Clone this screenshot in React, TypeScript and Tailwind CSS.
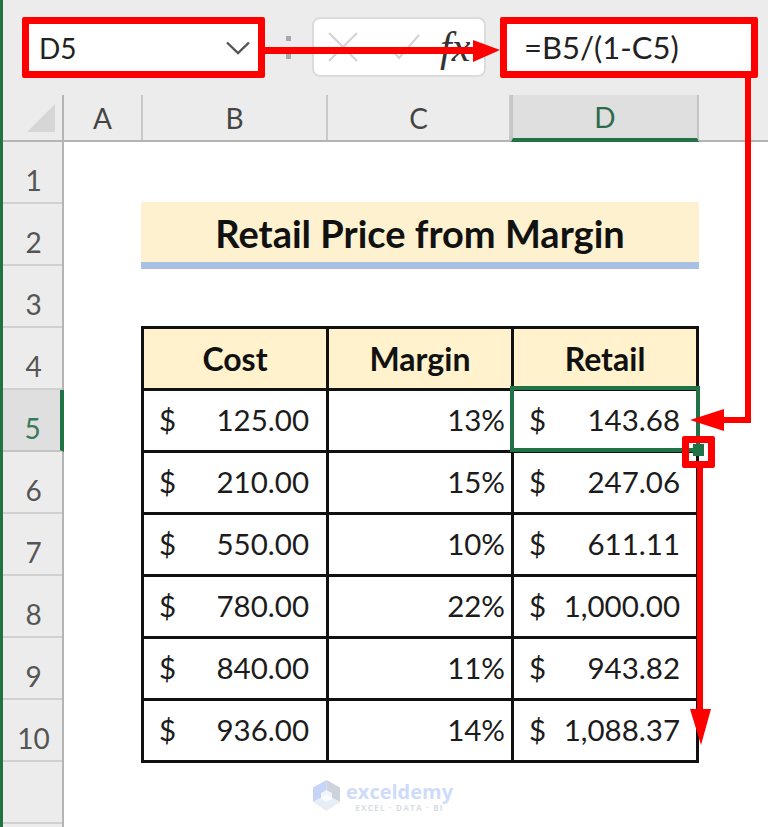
const font = "font-['Lato','Liberation_Sans',sans-serif]";

const rows = [
  { cost: "125.00", margin: "13%", retail: "143.68" },
  { cost: "210.00", margin: "15%", retail: "247.06" },
  { cost: "550.00", margin: "10%", retail: "611.11" },
  { cost: "780.00", margin: "22%", retail: "1,000.00" },
  { cost: "840.00", margin: "11%", retail: "943.82" },
  { cost: "936.00", margin: "14%", retail: "1,088.37" },
];

const columns = [
  { label: "A", width: "w-[79px]" },
  { label: "B", width: "w-[185px]" },
  { label: "C", width: "w-[183px]" },
  { label: "D", width: "w-[188px]", active: true },
];

const Money = ({ value, className }: { value: string; className: string }) => (
  <td className={`border-[3px] border-[#111] ${className}`}>
    <div className="flex items-center justify-between text-[29.5px] text-[#1c1c1c]">
      <span>$</span>
      <span>{value}</span>
    </div>
  </td>
);

const Arrows = () => (
  <svg className="absolute -left-[3px] top-0 pointer-events-none" width="768" height="827" viewBox="0 0 768 827">
    <g fill="#ff0000">
      <rect x="265" y="47" width="212" height="7" />
      <path d="M473 40 L500 50 L473 62 Z" />
      <rect x="745" y="78" width="6" height="345" />
      <rect x="716" y="417" width="35" height="6" />
      <path d="M690 420 L724 409 L724 431 Z" />
      <rect x="697" y="468" width="6" height="244" />
      <path d="M690 709 L711 709 L701 745 Z" />
    </g>
  </svg>
);

const Watermark = () => (
  <div className="absolute left-[310px] top-[780px] flex items-start gap-[6px]">
    <svg width="27" height="31" viewBox="0 0 27 31">
      <path d="M13.5 0 L27 7.5 L27 22 L13.5 15 Z" fill="#cdd3dc" />
      <path d="M13.5 0 L0 7.5 L0 22 L13.5 15 Z" fill="#c6d5f7" />
      <path d="M0 22 L13.5 15 L27 22 L13.5 31 Z" fill="#e6edf5" />
      <path d="M13.5 10 L19 13 L19 19 L13.5 22 L8 19 L8 13 Z" fill="#ffffff" opacity="0.75" />
    </svg>
    <div className="flex flex-col items-center">
      <span className="text-[20px] leading-[23px] font-bold text-[#cfdcf9] font-['Open_Sans',sans-serif]">exceldemy</span>
      <span className="text-[8px] leading-[9px] font-bold tracking-[1.3px] text-[#d9dde3] font-['Open_Sans',sans-serif]">EXCEL · DATA · BI</span>
    </div>
  </div>
);

export default function App() {
  return (
    <div className={`relative w-[768px] h-[827px] overflow-hidden bg-white border-l-[3px] border-[#217346] flex flex-col ${font}`}>
      {/* formula bar */}
      <div className="h-[95px] shrink-0 bg-[#ececec] flex items-start pt-[17px] pl-[19px]">
        <div className="w-[243px] h-[61px] bg-white border-[7px] border-[#ff0000] rounded-[2px] flex items-center justify-between pl-[10px] pr-[8px] text-[28px] text-[#222]">
          <span>D5</span>
          <svg width="24" height="14" viewBox="0 0 24 14" fill="none" stroke="#555" strokeWidth="2.4">
            <path d="M1 1.5 L12 12 L23 1.5" />
          </svg>
        </div>
        <div className="w-[47px] h-[61px] flex flex-col items-center justify-center gap-[13px]">
          <span className="w-[5px] h-[5px] bg-[#a8a8a8]" />
          <span className="w-[5px] h-[5px] bg-[#a8a8a8]" />
        </div>
        <div className="w-[174px] h-[60px] bg-white border-2 border-[#dcdcdc] rounded-[8px] flex items-center pl-[14px]">
          <svg width="30" height="30" viewBox="0 0 30 30" fill="none" stroke="#d2d2d2" strokeWidth="2">
            <path d="M1 1 L29 29 M29 1 L1 29" />
          </svg>
          <svg className="ml-[32px]" width="30" height="26" viewBox="0 0 30 26" fill="none" stroke="#d2d2d2" strokeWidth="2">
            <path d="M1 15 L9 24 L29 1" />
          </svg>
          <span className="ml-[20px] text-[42px] leading-none italic text-[#333] font-['Liberation_Serif',serif]">fx</span>
        </div>
        <div className="ml-[14px] w-[258px] h-[61px] bg-white border-[7px] border-[#ff0000] rounded-[2px] flex items-center pl-[17px] text-[31px] text-[#222]">
          =B5/(1-C5)
        </div>
      </div>

      {/* column headers */}
      <div className="h-[47px] shrink-0 bg-[#ececec] flex border-b-2 border-[#b4b4b4]">
        <div className="w-[61px] shrink-0 border-r-2 border-[#b4b4b4] flex items-end justify-end pr-[7px] pb-[8px]">
          <svg width="28" height="28" viewBox="0 0 28 28">
            <path d="M28 0 L28 28 L0 28 Z" fill="#d6d6d6" />
          </svg>
        </div>
        {columns.map((c) => (
          <div
            key={c.label}
            className={`${c.width} shrink-0 flex items-center justify-center text-[28px] ${
              c.active
                ? "bg-[#dfdfdf] text-[#2f6b4b] border-b-[4px] border-[#217346] -mb-[2px] border-x-2 border-x-[#c4c4c4]"
                : "text-[#444] border-r-2 border-[#c9c9c9]"
            }`}
          >
            {c.label}
          </div>
        ))}
      </div>

      {/* sheet */}
      <div className="flex flex-1 min-h-0">
        <div className="w-[61px] shrink-0 bg-[#ececec] border-r-2 border-[#b4b4b4] flex flex-col">
          {["1", "2", "3", "4", "5", "6", "7", "8", "9", "10", "", ""].map((n, i) => (
            <div
              key={i}
              className={`h-[62px] shrink-0 flex items-end justify-center pb-[1px] pl-[2px] text-[28px] border-b-2 ${
                n === "5"
                  ? "bg-[#dfdfdf] text-[#3b7a59] border-[#c4c4c4] border-r-[4px] border-r-[#217346] -mr-[2px]"
                  : "text-[#555] border-[#d0d0d0]"
              }`}
            >
              {n}
            </div>
          ))}
        </div>

        <div className="flex-1 pl-[77px] pt-[60px]">
          <div className="w-[558px] h-[67px] bg-[#fdf1d0] border-b-[7px] border-[#a9bfe4] flex items-center justify-center pt-[2px] text-[38px] font-bold text-[#111]">
            Retail Price from Margin
          </div>
          <table className="mt-[57px] w-[558px] table-fixed border-collapse">
            <thead>
              <tr className="h-[62px] bg-[#fff2cc] text-[32px] font-bold text-[#111]">
                <th className="border-[3px] border-[#111] font-bold">Cost</th>
                <th className="border-[3px] border-[#111] font-bold">Margin</th>
                <th className="border-[3px] border-[#111] font-bold">Retail</th>
              </tr>
            </thead>
            <tbody>
              {rows.map((r) => (
                <tr key={r.cost} className="h-[62px]">
                  <Money value={r.cost} className="pl-[15px] pr-[17px]" />
                  <td className="border-[3px] border-[#111] text-right pr-[6px] text-[29.5px] text-[#1c1c1c]">{r.margin}</td>
                  <Money value={r.retail} className="pl-[15px] pr-[16px]" />
                </tr>
              ))}
            </tbody>
          </table>
        </div>
      </div>

      {/* selection */}
      <div className="absolute left-[507px] top-[386px] w-[190px] h-[66px] border-[4px] border-[#217346]" />
      <div className="absolute left-[679px] top-[436px] w-[33px] h-[32px] border-[7px] border-[#ff0000] rounded-[2px]" />
      <div className="absolute left-[690px] top-[444px] w-[11px] h-[12px] bg-[#217346]" />
      <Arrows />
      <Watermark />
    </div>
  );
}
